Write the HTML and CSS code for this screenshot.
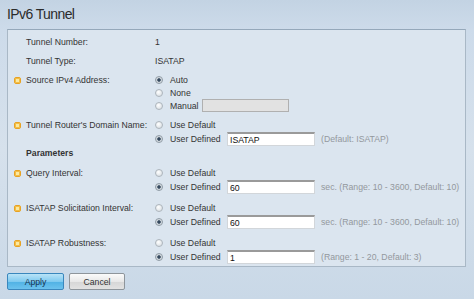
FILE: index.html
```html
<!DOCTYPE html>
<html lang="en">
<head>
    <meta charset="UTF-8">
    <title>IPv6 Tunnel</title>
    <link rel="stylesheet" href="styles.css">
</head>
<body>
    <h1 class="title">IPv6 Tunnel</h1>
    <div class="panel">
        <div class="row simple">
            <div class="label plain">Tunnel Number:</div>
            <div class="value">1</div>
        </div>
        <div class="row simple">
            <div class="label plain">Tunnel Type:</div>
            <div class="value">ISATAP</div>
        </div>

        <div class="row group tight">
            <div class="label"><span class="star"></span>Source IPv4 Address:</div>
            <div class="options">
                <label class="opt"><input type="radio" name="src" checked>Auto</label>
                <label class="opt"><input type="radio" name="src">None</label>
                <label class="opt"><input type="radio" name="src">Manual<input type="text" class="field manual" disabled></label>
            </div>
        </div>

        <div class="row group near">
            <div class="label"><span class="star"></span>Tunnel Router's Domain Name:</div>
            <div class="options">
                <label class="opt"><input type="radio" name="dom">Use Default</label>
                <label class="opt"><input type="radio" name="dom" checked><span class="opt-text">User Defined</span><input type="text" class="field" value="ISATAP"><span class="hint">(Default: ISATAP)</span></label>
            </div>
        </div>

        <div class="row section">
            <div class="label plain"><b>Parameters</b></div>
        </div>

        <div class="row group">
            <div class="label"><span class="star"></span>Query Interval:</div>
            <div class="options">
                <label class="opt"><input type="radio" name="qi">Use Default</label>
                <label class="opt"><input type="radio" name="qi" checked><span class="opt-text">User Defined</span><input type="text" class="field" value="60"><span class="hint">sec. (Range: 10 - 3600, Default: 10)</span></label>
            </div>
        </div>

        <div class="row group">
            <div class="label"><span class="star"></span>ISATAP Solicitation Interval:</div>
            <div class="options">
                <label class="opt"><input type="radio" name="si">Use Default</label>
                <label class="opt"><input type="radio" name="si" checked><span class="opt-text">User Defined</span><input type="text" class="field" value="60"><span class="hint">sec. (Range: 10 - 3600, Default: 10)</span></label>
            </div>
        </div>

        <div class="row group">
            <div class="label"><span class="star"></span>ISATAP Robustness:</div>
            <div class="options">
                <label class="opt"><input type="radio" name="rb">Use Default</label>
                <label class="opt"><input type="radio" name="rb" checked><span class="opt-text">User Defined</span><input type="text" class="field" value="1"><span class="hint">(Range: 1 - 20, Default: 3)</span></label>
            </div>
        </div>
    </div>

    <div class="actions">
        <button class="btn apply">Apply</button>
        <button class="btn cancel">Cancel</button>
    </div>
</body>
</html>
```

FILE: styles.css
```css
body {
    margin: 0;
    width: 474px;
    height: 299px;
    overflow: hidden;
    font-family: "Liberation Sans", Arial, sans-serif;
    font-size: 8.7px;
    color: #333;
    background: linear-gradient(to bottom, #c3d3e3 0, #cddbea 30px, #d6e1ec 150px, #c9d8e7 299px);
}

.title {
    margin: 0;
    padding: 6px 0 0 7px;
    height: 23px;
    font-size: 14px;
    font-weight: normal;
    letter-spacing: -0.6px;
    color: #2b2b2b;
}

.panel {
    margin-left: 7px;
    width: 459px;
    box-sizing: border-box;
    border: 1px solid #a9b8c6;
    border-top-color: #95a8ba;
    background: #dbe5ef;
    padding: 5px 0 2px 0;
}

.row {
    display: grid;
    grid-template-columns: 147px 1fr;
}

.row.simple {
    height: 14px;
    line-height: 14px;
    margin-bottom: 5px;
}

.row.group {
    margin-top: 7px;
}

.row.near {
    margin-top: 6px;
}

.row.tight {
    margin-top: 0;
}

.row.tight .opt {
    height: 13px;
}

.row.section {
    height: 13px;
    line-height: 13px;
}

.label {
    display: flex;
    align-items: center;
    height: 14px;
    white-space: nowrap;
}

.label.plain {
    padding-left: 18px;
}

.star {
    width: 5px;
    height: 5px;
    margin: 0 5px 0 6px;
    border-radius: 2px;
    background: #fbe9a0;
    border: 1px solid #e8a223;
    box-shadow: inset 0 0 0 1px #f3bd45;
}

.value {
    line-height: 14px;
}

.options {
    display: flex;
    flex-direction: column;
}

.opt {
    display: flex;
    align-items: center;
    height: 14px;
    white-space: nowrap;
}

.opt input[type="radio"] {
    appearance: none;
    -webkit-appearance: none;
    width: 8px;
    height: 8px;
    margin: 0 7px 0 0;
    border-radius: 50%;
    border: 1px solid #adb5bc;
    background: radial-gradient(circle at 40% 35%, #ffffff 0, #dde2e6 75%);
    box-sizing: border-box;
}

.opt input[type="radio"]:checked {
    border-color: #8f9ba5;
    background: radial-gradient(circle, #35495e 0, #35495e 1.4px, #c9d1d8 2px, #eef1f3 100%);
}

.opt-text {
    width: 57px;
}

.field {
    width: 88px;
    height: 14px;
    box-sizing: border-box;
    margin: 0;
    padding: 0 2px;
    border: 1px solid #d2d6da;
    border-top: 2px solid #9a9a9a;
    background: #fff;
    font-family: inherit;
    font-size: 8.7px;
    color: #111;
    outline: none;
}

.field.manual {
    width: 87px;
    height: 13px;
    margin-left: 3px;
    background: #e2e2e2;
    border: 1px solid #b0b0b0;
}

.hint {
    margin-left: 6px;
    color: #93989d;
}

.actions {
    display: flex;
    gap: 5px;
    padding: 6px 0 0 7px;
}

.btn {
    height: 17px;
    margin: 0;
    padding: 0;
    font-family: inherit;
    font-size: 8.7px;
    border-radius: 2px;
    cursor: pointer;
}

.apply {
    width: 57px;
    color: #16324f;
    border: 1px solid #3a87bd;
    background: linear-gradient(to bottom, #b9e3f7 0, #7fcaf0 50%, #4fb1e4 51%, #6cc2ee 100%);
}

.cancel {
    width: 56px;
    color: #333;
    border: 1px solid #8e959b;
    background: linear-gradient(to bottom, #fbfbfb 0, #e8e8e8 50%, #d6d6d6 51%, #e2e2e2 100%);
}
```
